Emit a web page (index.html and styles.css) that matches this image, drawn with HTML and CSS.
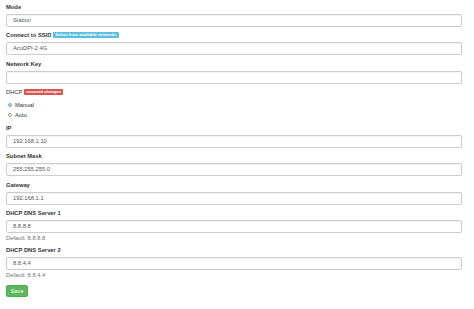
FILE: index.html
```html
<!DOCTYPE html>
<html lang="en">

<head>
    <meta charset="UTF-8">
    <meta name="viewport" content="width=device-width, initial-scale=1.0">
    <title>WiFi Settings</title>
    <link rel="stylesheet" href="styles.css">
</head>

<body>
    <form class="settings">
        <div class="form-group">
            <label>Mode</label>
            <div class="form-control">Station</div>
        </div>
        <div class="form-group">
            <label>Connect to SSID <span class="badge info">Select from available networks</span></label>
            <div class="form-control">AcuDPI-2.4G</div>
        </div>
        <div class="form-group">
            <label>Network Key</label>
            <div class="form-control"></div>
        </div>
        <div class="form-group dhcp">
            <label class="plain">DHCP <span class="badge danger">unsaved changes</span></label>
            <div class="radio checked"><span class="dot"></span>Manual</div>
            <div class="radio"><span class="dot"></span>Auto</div>
        </div>
        <div class="form-group">
            <label>IP</label>
            <div class="form-control">192.168.1.10</div>
        </div>
        <div class="form-group">
            <label>Subnet Mask</label>
            <div class="form-control">255.255.255.0</div>
        </div>
        <div class="form-group">
            <label>Gateway</label>
            <div class="form-control">192.168.1.1</div>
        </div>
        <div class="form-group">
            <label>DHCP DNS Server 1</label>
            <div class="form-control">8.8.8.8</div>
            <p class="help">Default: 8.8.8.8</p>
        </div>
        <div class="form-group">
            <label>DHCP DNS Server 2</label>
            <div class="form-control">8.8.4.4</div>
            <p class="help">Default: 8.8.4.4</p>
        </div>
        <button type="button" class="btn-save">Save</button>
    </form>
</body>

</html>
```

FILE: styles.css
```css
* {
    margin: 0;
    padding: 0;
    box-sizing: border-box;
    font-family: 'Liberation Sans', Arial, sans-serif;
}

body {
    background: #fff;
    color: #333;
    font-size: 5.8px;
}

.settings {
    padding: 3.5px 12px 0 6px;
}

.form-group {
    margin-bottom: 5.5px;
}

.form-group.dhcp {
    margin-top: 2.5px;
    margin-bottom: 5px;
}

.form-group label {
    display: block;
    font-weight: bold;
    line-height: 7px;
    margin-bottom: 3px;
}

.form-group label.plain {
    font-weight: normal;
    margin-bottom: 3.5px;
}

.form-control {
    height: 13px;
    border: 1px solid #ccc;
    border-radius: 2px;
    padding: 0 6px;
    line-height: 11px;
    color: #555;
    box-shadow: inset 0 1px 1px rgba(0, 0, 0, 0.05);
}

.badge {
    display: inline-block;
    vertical-align: 1px;
    font-size: 4.2px;
    line-height: 5.5px;
    font-weight: bold;
    color: #fff;
    padding: 0 2.2px;
    border-radius: 1px;
}

.badge.info {
    background: #5bc0de;
}

.badge.danger {
    background: #d9534f;
}

.radio {
    display: flex;
    align-items: center;
    line-height: 10px;
    padding-left: 2px;
    color: #333;
}

.radio .dot {
    width: 4px;
    height: 4px;
    border: 0.6px solid #999;
    border-radius: 50%;
    margin-right: 3px;
    background: #fff;
}

.radio.checked .dot {
    border-color: #6f9fd8;
    background: radial-gradient(circle, #333 0 30%, #cfe0f5 35%);
}

.help {
    color: #737373;
    line-height: 7px;
    margin-top: 1.5px;
}

.btn-save {
    margin-top: 1px;
    width: 22px;
    height: 12px;
    border: 1px solid #4cae4c;
    border-radius: 2px;
    background: #5cb85c;
    color: #fff;
    font-size: 5.8px;
}
```
